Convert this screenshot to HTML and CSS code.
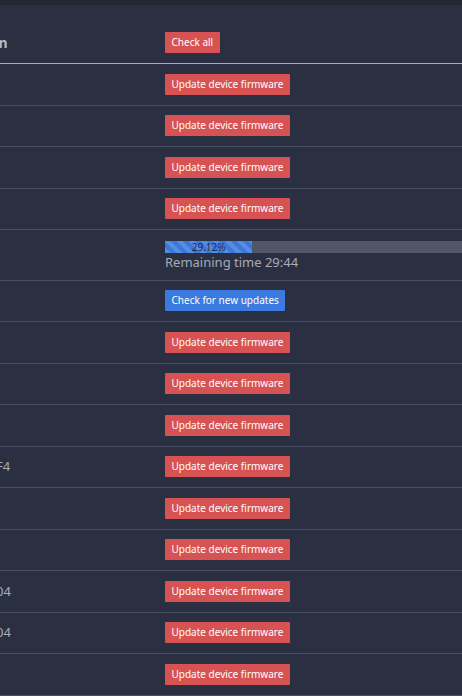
FILE: index.html
```html
<!DOCTYPE html>
<html lang="en">
<head>
    <meta charset="UTF-8">
    <meta name="viewport" content="width=device-width, initial-scale=1.0">
    <title>Devices</title>
    <link rel="stylesheet" href="styles.css">
</head>
<body>

    <div class="topbar"></div>

    <div class="table-wrap">
        <table class="devices">
            <thead>
                <tr>
                    <th class="col-version">Version</th>
                    <th><button type="button" class="btn btn-danger">Check all</button></th>
                </tr>
            </thead>
            <tbody>
                <tr><td class="col-version"></td><td><button type="button" class="btn btn-danger">Update device firmware</button></td></tr>
                <tr><td class="col-version"></td><td><button type="button" class="btn btn-danger">Update device firmware</button></td></tr>
                <tr><td class="col-version"></td><td><button type="button" class="btn btn-danger">Update device firmware</button></td></tr>
                <tr><td class="col-version"></td><td><button type="button" class="btn btn-danger">Update device firmware</button></td></tr>
                <tr>
                    <td class="col-version"></td>
                    <td>
                        <div class="progress">
                            <div class="progress-bar" style="width: 29.12%">29.12%</div>
                        </div>
                        <div class="remaining">Remaining time 29:44</div>
                    </td>
                </tr>
                <tr><td class="col-version"></td><td><button type="button" class="btn btn-primary">Check for new updates</button></td></tr>
                <tr><td class="col-version"></td><td><button type="button" class="btn btn-danger">Update device firmware</button></td></tr>
                <tr><td class="col-version"></td><td><button type="button" class="btn btn-danger">Update device firmware</button></td></tr>
                <tr><td class="col-version"></td><td><button type="button" class="btn btn-danger">Update device firmware</button></td></tr>
                <tr><td class="col-version">0x0001F4</td><td><button type="button" class="btn btn-danger">Update device firmware</button></td></tr>
                <tr><td class="col-version"></td><td><button type="button" class="btn btn-danger">Update device firmware</button></td></tr>
                <tr><td class="col-version"></td><td><button type="button" class="btn btn-danger">Update device firmware</button></td></tr>
                <tr><td class="col-version">0x000104</td><td><button type="button" class="btn btn-danger">Update device firmware</button></td></tr>
                <tr><td class="col-version">0x000104</td><td><button type="button" class="btn btn-danger">Update device firmware</button></td></tr>
                <tr><td class="col-version"></td><td><button type="button" class="btn btn-danger">Update device firmware</button></td></tr>
            </tbody>
        </table>
    </div>

</body>
</html>
```

FILE: styles.css
```css
html, body {
    margin: 0;
    background-color: #2a3042;
    overflow: hidden;
}
body {
    font-family: "Noto Sans", "Open Sans", sans-serif;
    font-size: 13px;
    color: #a6abb6;
}
.topbar {
    height: 5px;
    background-color: #222733;
}
.table-wrap {
    margin-top: 16px;
    margin-left: -60px;
}
.devices {
    border-collapse: collapse;
    width: 560px;
}
.devices th, .devices td {
    text-align: left;
    vertical-align: top;
    padding: 9.75px 12px;
    border-bottom: 1px solid #4a5062;
    white-space: nowrap;
}
.devices th {
    padding-top: 11px;
    padding-bottom: 10px;
    font-weight: bold;
    color: #b4b9c3;
    border-bottom-color: #a9adb6;
    line-height: 21px;
}
.devices th.col-version {
    font-size: 14px;
    padding-left: 15px;
    width: 186px;
}
.devices .col-version {
    width: 189px;
    line-height: 21px;
}
.devices td.col-version {
    vertical-align: middle;
}
.btn {
    display: inline-block;
    font-family: "Noto Sans", "Open Sans", sans-serif;
    font-size: 10px;
    line-height: 15px;
    padding: 3px 6.5px;
    border: none;
    border-radius: 1px;
    color: #fff;
    cursor: pointer;
    vertical-align: top;
}
.btn-danger {
    background-color: #d75252;
}
.btn-primary {
    background-color: #3b7ade;
}
.progress {
    width: 300px;
    height: 12px;
    margin-top: 1px;
    background-color: #505666;
}
.progress-bar {
    height: 12px;
    font-size: 10px;
    line-height: 12px;
    text-align: center;
    color: #20283a;
    background-color: #3b78dc;
    background-image: linear-gradient(45deg, rgba(255,255,255,.15) 25%, transparent 25%, transparent 50%, rgba(255,255,255,.15) 50%, rgba(255,255,255,.15) 75%, transparent 75%, transparent);
    background-size: 12px 12px;
}
.remaining {
    font-size: 13px;
    line-height: 16px;
    margin-top: 1px;
}
```
